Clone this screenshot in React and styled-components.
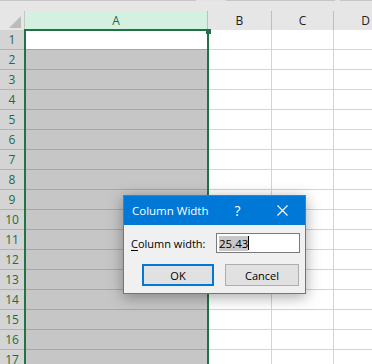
import React from 'react';
import styled, { createGlobalStyle } from 'styled-components';

const GlobalStyle = createGlobalStyle`
  html, body {
    margin: 0;
    padding: 0;
    background: #fff;
  }
  body {
    width: 372px;
    height: 364px;
    overflow: hidden;
  }
`;

const COLS = [
  { id: 'A', width: 183, selected: true },
  { id: 'B', width: 64 },
  { id: 'C', width: 62 },
  { id: 'D', width: 64 },
];

const ROWS = Array.from({ length: 17 }, (_, i) => i + 1);

const Sheet = styled.div`
  position: relative;
  width: 372px;
  height: 364px;
  overflow: hidden;
  background: #e6e6e6;
  font-family: "Open Sans", "Noto Sans", sans-serif;
`;

const TopEdge = styled.div`
  display: flex;
  height: 1px;
  margin-bottom: 10px;
`;

const EdgeSeg = styled.div`
  flex: ${({ $grow }) => ($grow ? 1 : 'none')};
  width: ${({ $w }) => $w || 0}px;
  background: ${({ $gap }) => ($gap ? '#e2e2e2' : '#c6c6c6')};
`;

const HeaderRow = styled.div`
  display: flex;
  height: 19px;
`;

const Corner = styled.div`
  box-sizing: border-box;
  flex: none;
  width: 25px;
  display: flex;
  align-items: flex-end;
  justify-content: flex-end;
  padding: 0 3px 2px 0;
  border-right: 1px solid #c6c6c6;
`;

const ColHeader = styled.div`
  box-sizing: border-box;
  flex: none;
  width: ${({ $w }) => $w}px;
  display: flex;
  align-items: center;
  justify-content: center;
  border-right: 1px solid #bdbdbd;
  background: ${({ $sel }) => ($sel ? '#d3f0e0' : '#e6e6e6')};
  color: ${({ $sel }) => ($sel ? '#1e6b41' : '#222')};
  font-size: 12px;
`;

const Row = styled.div`
  display: flex;
  height: 20px;
`;

const RowHeader = styled.div`
  box-sizing: border-box;
  flex: none;
  width: 25px;
  display: flex;
  align-items: center;
  justify-content: center;
  background: #d4d4d4;
  border-bottom: 1px solid #b3b3b3;
  color: #1e6b41;
  font-size: 12px;
  padding-right: 1px;
`;

const Cell = styled.div`
  box-sizing: border-box;
  flex: none;
  width: ${({ $w }) => $w}px;
  background: ${({ $sel, $active }) => ($sel && !$active ? '#c6c6c6' : '#fff')};
  border-bottom: 1px solid ${({ $sel }) => ($sel ? '#a6a6a6' : '#d4d4d4')};
  border-right: 1px solid ${({ $sel }) => ($sel ? 'transparent' : '#d4d4d4')};
`;

const Selection = styled.div`
  position: absolute;
  left: 24px;
  top: 29px;
  bottom: 0;
  width: 185px;
  box-sizing: border-box;
  border: 2px solid #217346;
  border-bottom: none;
  pointer-events: none;
`;

const FillHandle = styled.div`
  position: absolute;
  left: 180px;
  top: -2px;
  width: 5px;
  height: 5px;
  background: #217346;
`;

const Dialog = styled.div`
  position: absolute;
  left: 123px;
  top: 195px;
  width: 183px;
  height: 99px;
  box-sizing: border-box;
  display: flex;
  flex-direction: column;
  background: #f0f0f0;
  border: 1px solid #2f86d4;
  box-shadow: 0 3px 14px rgba(0, 0, 0, 0.35);
  font-family: "Open Sans", "Noto Sans", sans-serif;
  font-size: 11px;
  color: #000;
`;

const TitleBar = styled.div`
  display: flex;
  align-items: center;
  height: 29px;
  background: #0078d7;
  color: #fff;
`;

const Title = styled.div`
  flex: 1;
  padding-left: 8px;
  font-size: 11.5px;
`;

const TitleButton = styled.div`
  width: 45px;
  height: 100%;
  display: flex;
  align-items: center;
  justify-content: center;
  font-size: 14px;
`;

const Body = styled.div`
  display: flex;
  flex-direction: column;
  gap: 11px;
  padding: 8px 5px 7px 7px;
`;

const FieldRow = styled.div`
  display: flex;
  align-items: center;
  height: 20px;
`;

const FieldLabel = styled.label`
  & u {
    text-underline-offset: 2px;
  }
`;

const TextBox = styled.div`
  box-sizing: border-box;
  margin-left: auto;
  width: 84px;
  height: 20px;
  display: flex;
  align-items: center;
  padding-left: 2px;
  background: #fff;
  border: 1px solid #7a7a7a;
  font-size: 11.5px;
`;

const Selected = styled.span`
  background: #c8c8c8;
  line-height: 15px;
`;

const Caret = styled.span`
  width: 1px;
  height: 14px;
  background: #000;
`;

const ButtonRow = styled.div`
  display: flex;
  justify-content: flex-end;
  gap: 11px;
  padding-right: 1px;
`;

const Button = styled.div`
  box-sizing: border-box;
  width: ${({ $w }) => $w}px;
  height: 22px;
  display: flex;
  align-items: center;
  justify-content: center;
  background: #e1e1e1;
  border: ${({ $primary }) => ($primary ? '2px solid #0078d7' : '1px solid #adadad')};
`;

const App = () => (
  <Sheet>
    <GlobalStyle />
    <TopEdge>
      <EdgeSeg $w={196} />
      <EdgeSeg $w={30} $gap />
      <EdgeSeg $w={109} />
      <EdgeSeg $w={5} $gap />
      <EdgeSeg $grow />
    </TopEdge>
    <HeaderRow>
      <Corner>
        <svg width="12" height="12" viewBox="0 0 12 12">
          <polygon points="12,0 12,12 0,12" fill="#bcbcbc" />
        </svg>
      </Corner>
      {COLS.map((c) => (
        <ColHeader key={c.id} $w={c.width} $sel={c.selected}>
          {c.id}
        </ColHeader>
      ))}
    </HeaderRow>
    {ROWS.map((r) => (
      <Row key={r}>
        <RowHeader>{r}</RowHeader>
        {COLS.map((c) => (
          <Cell key={c.id} $w={c.width} $sel={c.selected} $active={r === 1} />
        ))}
      </Row>
    ))}
    <Selection>
      <FillHandle />
    </Selection>
    <Dialog>
      <TitleBar>
        <Title>Column Width</Title>
        <TitleButton>?</TitleButton>
        <TitleButton>
          <svg width="11" height="11" viewBox="0 0 11 11">
            <path d="M0.5 0.5 L10.5 10.5 M10.5 0.5 L0.5 10.5" stroke="#fff" strokeWidth="1.1" />
          </svg>
        </TitleButton>
      </TitleBar>
      <Body>
        <FieldRow>
          <FieldLabel>
            <u>C</u>olumn width:
          </FieldLabel>
          <TextBox>
            <Selected>25.43</Selected>
            <Caret />
          </TextBox>
        </FieldRow>
        <ButtonRow>
          <Button $w={72} $primary>OK</Button>
          <Button $w={74}>Cancel</Button>
        </ButtonRow>
      </Body>
    </Dialog>
  </Sheet>
);

export default App;
